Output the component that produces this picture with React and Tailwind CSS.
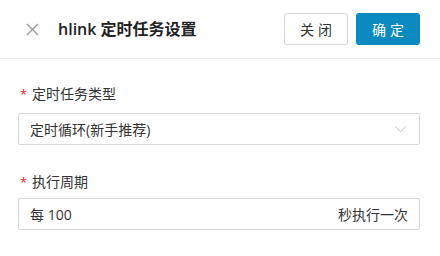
import React from 'react'

const font = { fontFamily: '"Open Sans", "Noto Sans CJK SC", sans-serif' }

function Label({ children }) {
  return (
    <div className="flex items-center h-5 text-[14px] text-[#333]">
      <span className="text-[#f5222d] w-3 text-[13px] leading-none pt-[3px]">*</span>
      <span>{children}</span>
    </div>
  )
}

export default function App() {
  return (
    <div className="w-[440px] h-[256px] bg-white" style={font}>
      {/* header */}
      <div className="h-[59px] border-b border-[#eeeeee] flex items-center pl-[26px] pr-[20px]">
        <svg width="13" height="13" viewBox="0 0 13 13" className="shrink-0">
          <path d="M1 1 L12 12 M12 1 L1 12" stroke="#9a9a9a" strokeWidth="1.4" />
        </svg>
        <div className="ml-[19px] text-[16px] font-semibold text-[#222] leading-none">hlink 定时任务设置</div>
        <div className="ml-auto flex gap-2">
          <button className="w-16 h-8 border border-[#d9d9d9] rounded-[3px] bg-white text-[14px] text-[#333] tracking-[4px] pl-1">关闭</button>
          <button className="w-16 h-8 rounded-[3px] bg-[#0a8ac0] text-[14px] text-white tracking-[4px] pl-1">确定</button>
        </div>
      </div>

      {/* body */}
      <div className="pt-6 pl-[18px] pr-5">
        <div className="pl-[2px]">
          <Label>定时任务类型</Label>
        </div>
        <div className="mt-[10px] h-[32px] border border-[#d9d9d9] rounded-[2px] flex items-center pl-[11px] pr-3 text-[14px] text-[#333]">
          <span>定时循环(新手推荐)</span>
          <svg width="11" height="7" viewBox="0 0 11 7" className="ml-auto mr-[1px]">
            <path d="M0.5 0.5 L5.5 5.8 L10.5 0.5" fill="none" stroke="#c4c4c4" strokeWidth="1" />
          </svg>
        </div>

        <div className="pl-[2px] mt-[26px]">
          <Label>执行周期</Label>
        </div>
        <div className="mt-[7px] h-[32px] border border-[#d9d9d9] rounded-[2px] flex items-center pl-[11px] pr-[11px] text-[14px] text-[#333]">
          <span>每 100</span>
          <span className="ml-auto">秒执行一次</span>
        </div>
      </div>
    </div>
  )
}
